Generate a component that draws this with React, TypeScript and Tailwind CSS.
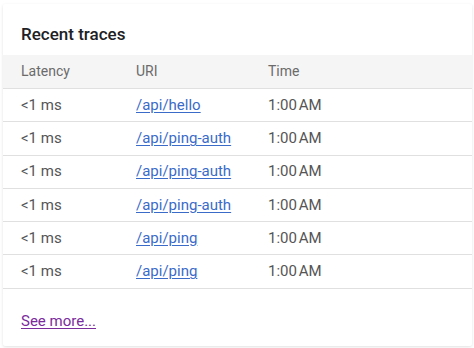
import React from 'react';

interface Trace {
  latency: string;
  uri: string;
  time: string;
}

const traces: Trace[] = [
  { latency: '<1 ms', uri: '/api/hello', time: '1:00\u202FAM' },
  { latency: '<1 ms', uri: '/api/ping-auth', time: '1:00\u202FAM' },
  { latency: '<1 ms', uri: '/api/ping-auth', time: '1:00\u202FAM' },
  { latency: '<1 ms', uri: '/api/ping-auth', time: '1:00\u202FAM' },
  { latency: '<1 ms', uri: '/api/ping', time: '1:00\u202FAM' },
  { latency: '<1 ms', uri: '/api/ping', time: '1:00\u202FAM' },
];

const App: React.FC = () => {
  return (
    <div className="w-[474px] h-[348px] bg-white overflow-hidden pt-[4px] pl-[3px] font-['Roboto',sans-serif]">
      <div className="w-[469px] h-[342px] bg-white rounded-[2px] shadow-[0_1px_3px_rgba(0,0,0,0.12)]">
        {/* Title */}
        <h2 className="pl-[18px] pt-[20px] pb-[11px] text-[17px] leading-[20px] font-medium text-[#202124]">
          Recent traces
        </h2>

        {/* Header */}
        <div className="grid grid-cols-[115px_132px_1fr] pl-[18px] h-[34px] items-center bg-[#f5f5f5] border-b border-[#e0e0e0] text-[14px] text-[#6b6b6b]">
          <span>Latency</span>
          <span>URI</span>
          <span>Time</span>
        </div>

        {/* Rows */}
        {traces.map((t, i) => (
          <div
            key={i}
            className="grid grid-cols-[115px_132px_1fr] pl-[18px] h-[33.3px] items-center border-b border-[#e0e0e0] text-[15px] text-[#555555]"
          >
            <span>{t.latency}</span>
            <span>
              <a href="#" className="text-[#3a6bc9] underline underline-offset-2">
                {t.uri}
              </a>
            </span>
            <span>{t.time}</span>
          </div>
        ))}

        {/* Footer */}
        <div className="pl-[18px] pt-[22px] text-[15px] leading-[20px]">
          <a href="#" className="text-[#7b2b9c] underline underline-offset-2">
            See more...
          </a>
        </div>
      </div>
    </div>
  );
};

export default App;
